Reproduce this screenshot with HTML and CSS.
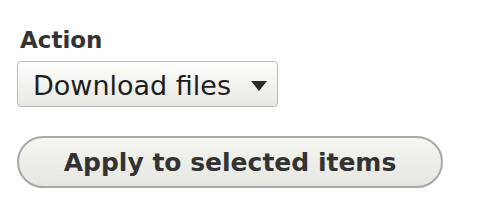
FILE: index.html
```html
<!DOCTYPE html>
<html lang="en">
<head>
    <meta charset="UTF-8">
    <title>Bulk operations</title>
    <link rel="stylesheet" href="styles.css">
</head>
<body>
    <form class="bulk-form">
        <label class="form-label" for="action">Action</label>
        <div class="select-wrap">
            <select class="form-select" id="action">
                <option>Download files</option>
                <option>Delete files</option>
            </select>
            <svg class="select-arrow" width="16" height="10" viewBox="0 0 16 10">
                <path d="M0 0 H16 L8 10 Z" fill="#2b2b2b"/>
            </svg>
        </div>
        <button class="apply-button" type="button">Apply to selected items</button>
    </form>
</body>
</html>
```

FILE: styles.css
```css
* {
    margin: 0;
    padding: 0;
    box-sizing: border-box;
}

body {
    font-family: 'DejaVu Sans', 'Liberation Sans', sans-serif;
    background: #fff;
    color: #333;
}

.bulk-form {
    display: flex;
    flex-direction: column;
    align-items: flex-start;
    padding: 27px 17px 0;
}

.form-label {
    font-size: 23px;
    line-height: 26px;
    font-weight: bold;
    color: #333;
    margin-left: 3px;
}

.select-wrap {
    position: relative;
    margin-top: 8px;
}

.form-select {
    appearance: none;
    -webkit-appearance: none;
    display: block;
    width: 261px;
    height: 46px;
    padding: 2px 40px 0 15px;
    font-family: inherit;
    font-size: 27px;
    color: #1e1e1e;
    background: linear-gradient(to bottom, #fdfdfb 0%, #f1f1ec 60%, #e9e9e3 100%);
    border: 1px solid #b9b9b6;
    border-radius: 4px;
    outline: none;
}

.select-arrow {
    position: absolute;
    right: 11px;
    top: 20px;
    pointer-events: none;
}

.apply-button {
    margin-top: 29px;
    width: 426px;
    height: 52px;
    font-family: inherit;
    font-size: 25px;
    font-weight: bold;
    color: #333;
    background: linear-gradient(to bottom, #f5f5f1 0%, #ededE8 60%, #e6e6e0 100%);
    border: 2px solid #a8a8a6;
    border-radius: 26px;
    cursor: pointer;
}
```
